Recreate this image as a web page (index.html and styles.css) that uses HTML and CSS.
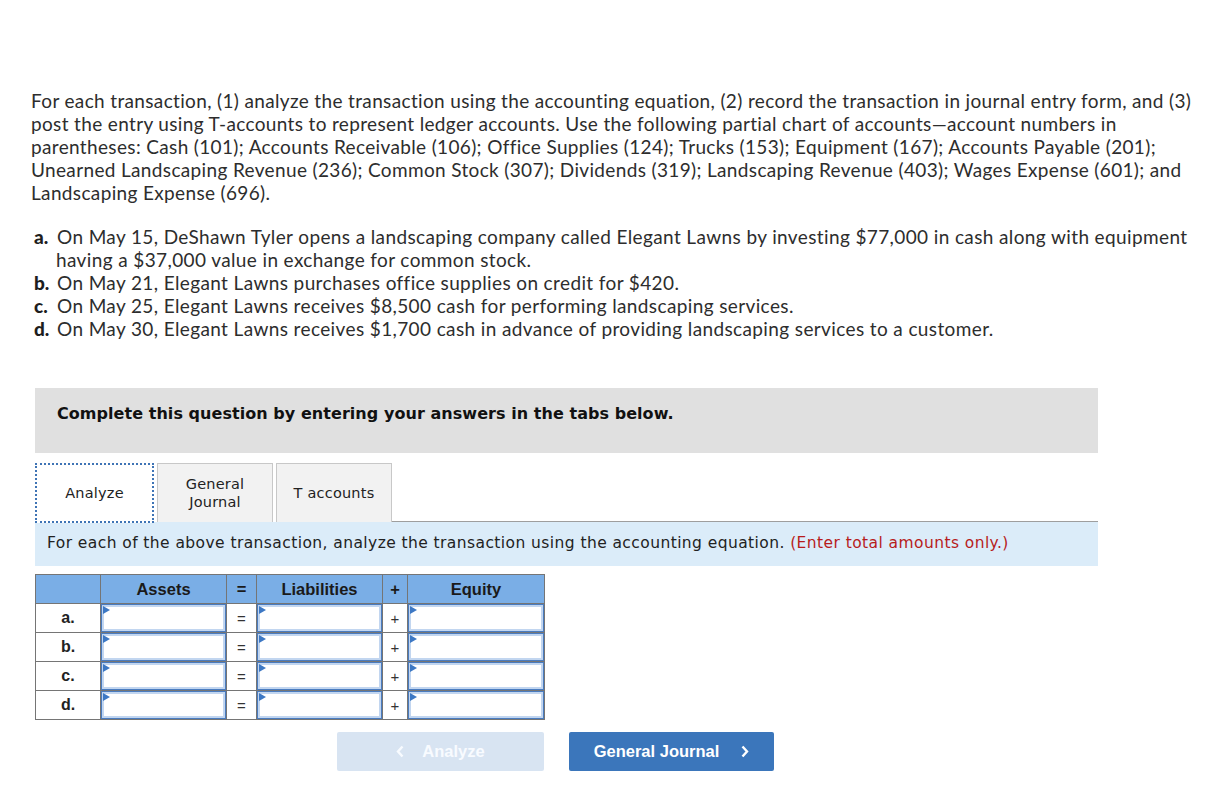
FILE: index.html
```html
<!DOCTYPE html>
<html>
<head>
<meta charset="utf-8">
<link rel="stylesheet" href="styles.css">
</head>
<body>
<div class="page">
  <p class="intro">For each transaction, (1) analyze the transaction using the accounting equation, (2) record the transaction in journal entry form, and (3) post the entry using T-accounts to represent ledger accounts. Use the following partial chart of accounts—account numbers in parentheses: Cash (101); Accounts Receivable (106); Office Supplies (124); Trucks (153); Equipment (167); Accounts Payable (201); Unearned Landscaping Revenue (236); Common Stock (307); Dividends (319); Landscaping Revenue (403); Wages Expense (601); and Landscaping Expense (696).</p>
  <ol class="tx">
    <li><b>a.</b>On May 15, DeShawn Tyler opens a landscaping company called Elegant Lawns by investing $77,000 in cash along with equipment having a $37,000 value in exchange for common stock.</li>
    <li><b>b.</b>On May 21, Elegant Lawns purchases office supplies on credit for $420.</li>
    <li><b>c.</b>On May 25, Elegant Lawns receives $8,500 cash for performing landscaping services.</li>
    <li><b>d.</b>On May 30, Elegant Lawns receives $1,700 cash in advance of providing landscaping services to a customer.</li>
  </ol>

  <div class="question">
    <div class="banner">Complete this question by entering your answers in the tabs below.</div>
    <div class="tabs">
      <div class="tab active">Analyze</div>
      <div class="tab">General<br>Journal</div>
      <div class="tab">T accounts</div>
      <div class="tabline"></div>
    </div>
    <div class="info">For each of the above transaction, analyze the transaction using the accounting equation. <span class="note">(Enter total amounts only.)</span></div>

    <table class="eq">
      <thead>
        <tr><th class="c-lbl"></th><th class="c-in1">Assets</th><th class="c-op1">=</th><th class="c-in2">Liabilities</th><th class="c-op2">+</th><th class="c-in3">Equity</th></tr>
      </thead>
      <tbody>
        <tr><td class="lbl">a.</td><td class="in"><div class="box"></div></td><td class="op">=</td><td class="in"><div class="box"></div></td><td class="op">+</td><td class="in"><div class="box"></div></td></tr>
        <tr><td class="lbl">b.</td><td class="in"><div class="box"></div></td><td class="op">=</td><td class="in"><div class="box"></div></td><td class="op">+</td><td class="in"><div class="box"></div></td></tr>
        <tr><td class="lbl">c.</td><td class="in"><div class="box"></div></td><td class="op">=</td><td class="in"><div class="box"></div></td><td class="op">+</td><td class="in"><div class="box"></div></td></tr>
        <tr><td class="lbl">d.</td><td class="in"><div class="box"></div></td><td class="op">=</td><td class="in"><div class="box"></div></td><td class="op">+</td><td class="in"><div class="box"></div></td></tr>
      </tbody>
    </table>

    <div class="nav">
      <button class="btn prev"><svg class="chev" width="8" height="13" viewBox="0 0 8 13"><path d="M6.5 1.5 L2 6.5 L6.5 11.5" fill="none" stroke="currentColor" stroke-width="2.4"/></svg>Analyze</button>
      <button class="btn next">General Journal<svg class="chev" width="8" height="13" viewBox="0 0 8 13"><path d="M1.5 1.5 L6 6.5 L1.5 11.5" fill="none" stroke="currentColor" stroke-width="2.4"/></svg></button>
    </div>
  </div>
</div>
</body>
</html>
```
FILE: styles.css
```css
html, body { margin: 0; padding: 0; background: #fff; }
.page { padding: 89px 0 0 31px; width: 1175px; }
.intro {
  margin: 0;
  font-family: Lato, "Liberation Sans", sans-serif;
  font-size: 19px;
  line-height: 23px;
  letter-spacing: 0.35px;
  color: #2d2d2d;
}
.tx {
  list-style: none;
  margin: 21px 0 0 0;
  padding: 0 0 0 3px;
  font-family: Lato, "Liberation Sans", sans-serif;
  font-size: 19px;
  letter-spacing: 0.38px;
  line-height: 23px;
  color: #2d2d2d;
}
.tx li { padding-left: 22px; text-indent: -22px; }
.tx b { display: inline-block; width: 23px; text-indent: 0; font-weight: 900; color: #1e1e1e; letter-spacing: 0; }

.question { margin: 48px 0 0 4px; width: 1063px; font-family: "DejaVu Sans", Verdana, sans-serif; }
.banner {
  background: #e0e0e0;
  height: 65px;
  box-sizing: border-box;
  padding: 16px 0 0 22px;
  font-weight: bold;
  font-size: 16px;
  letter-spacing: 0.05px;
  color: #111;
}
.tabs { display: flex; margin-top: 10px; align-items: flex-end; }
.tab {
  box-sizing: border-box;
  height: 59px;
  width: 116px;
  display: flex; align-items: center; justify-content: center;
  text-align: center;
  background: #f2f2f2;
  border: 1px solid #c8c8c8;
  border-bottom: none;
  font-size: 14.5px;
  letter-spacing: 0.2px;
  line-height: 18px;
  color: #222;
  margin-right: 3px;
}
.tab.active {
  width: 119px;
  background: #fff;
  border: 2px dotted #3f74b5;
  height: 60px;
  margin-bottom: -1px;
  position: relative;
  z-index: 1;
}
.tabline { flex: 1; border-bottom: 1px solid #9e9e9e; align-self: flex-end; margin-left: -3px; }
.info {
  background: #dbecf9;
  height: 44px;
  box-sizing: border-box;
  padding: 12px 0 0 12px;
  font-size: 15.5px;
  letter-spacing: 0.42px;
  color: #222;
}
.note { color: #b71c1c; }

.eq {
  margin-top: 8px;
  border-collapse: collapse;
  font-family: "Liberation Sans", Arial, sans-serif;
}
.eq th, .eq td { border: 1px solid #757575; padding: 0; }
.eq th {
  background: #7aaee6;
  height: 28px;
  font-size: 16.5px;
  font-weight: bold;
  color: #1a1a1a;
}
.c-lbl { width: 64px; }
.c-in1, .c-in2 { width: 125px; }
.c-op1 { width: 29px; }
.c-op2 { width: 24px; }
.c-in3 { width: 136px; }
.eq td { height: 28px; text-align: center; background: #fff; }
.lbl { font-weight: bold; font-size: 16px; color: #222; }
.op { font-size: 15px; color: #333; }
.in { padding: 0; }
.box {
  position: relative;
  height: 26px;
  border: 1px solid #4a7cc0;
  box-shadow: inset 0 0 0 2px #c2d6f0;
  background: #fff;
}
.box::before {
  content: "";
  position: absolute;
  left: 1px; top: 1px;
  border-left: 7px solid #3d78c4;
  border-top: 4px solid transparent;
  border-bottom: 4px solid transparent;
}

.nav { display: flex; gap: 25px; margin: 12px 0 0 302px; }
.btn {
  height: 39px;
  border: none;
  border-radius: 2px;
  font-family: "Liberation Sans", Arial, sans-serif;
  font-weight: bold;
  font-size: 16.5px;
  color: #fff;
  padding: 0;
  display: flex; align-items: center; justify-content: center;
}
.prev { width: 207px; background: #d8e4f2; color: #f8fbff; }
.prev .chev { margin-right: 18px; }
.next { width: 205px; background: #3b76bb; }
.next .chev { margin-left: 22px; }
```
